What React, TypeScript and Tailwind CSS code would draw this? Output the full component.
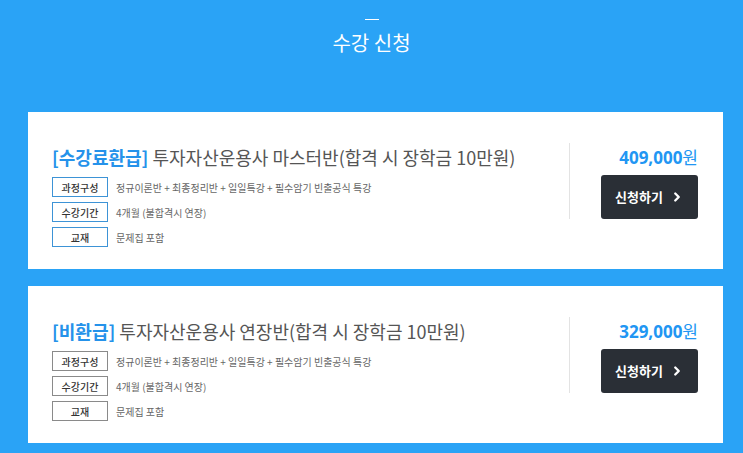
import { ChevronRight } from "lucide-react";

type Course = {
  tag: string;
  name: string;
  price: string;
  labelBorder: string;
};

const courses: Course[] = [
  {
    tag: "[수강료환급]",
    name: "투자자산운용사 마스터반(합격 시 장학금 10만원)",
    price: "409,000",
    labelBorder: "border-[#3d93d6]",
  },
  {
    tag: "[비환급]",
    name: "투자자산운용사 연장반(합격 시 장학금 10만원)",
    price: "329,000",
    labelBorder: "border-[#8a8a8a]",
  },
];

const rows = [
  { label: "과정구성", value: "정규이론반 + 최종정리반 + 일일특강 + 필수암기 빈출공식 특강" },
  { label: "수강기간", value: "4개월 (불합격시 연장)" },
  { label: "교재", value: "문제집 포함" },
];

function CourseCard({ course }: { course: Course }) {
  return (
    <div className="flex items-start bg-white pl-[24px] pr-[25px] pt-[31px] pb-[22px]">
      {/* Left: title + info rows */}
      <div className="flex-1 pt-[2px]">
        <h2 className="text-[18px] leading-[24px] text-[#555]">
          <span className="font-bold text-[#2592ea]">{course.tag}</span> {course.name}
        </h2>
        <div className="mt-[8px] flex flex-col gap-[5px]">
          {rows.map((row) => (
            <div key={row.label} className="flex items-center">
              <span
                className={`flex h-[20px] w-[56px] items-center justify-center border ${course.labelBorder} text-[10px] font-medium text-[#333]`}
              >
                {row.label}
              </span>
              <span className="ml-[8px] text-[10px] text-[#666]">{row.value}</span>
            </div>
          ))}
        </div>
      </div>

      {/* Right: price + button */}
      <div className="flex h-[76px] w-[129px] flex-col items-end border-l border-[#e3e3e3]">
        <p className="leading-[28px] text-[#2196f3]">
          <span className="font-['Open_Sans','Noto_Sans_CJK_KR',sans-serif] text-[17px] font-bold">
            {course.price}
          </span>
          <span className="text-[17px]">원</span>
        </p>
        <button className="mt-[3px] flex h-[44px] w-[97px] items-center justify-center gap-[7px] rounded-[3px] bg-[#2a2f36] text-[13px] font-bold text-white">
          신청하기
          <ChevronRight size={14} strokeWidth={4} />
        </button>
      </div>
    </div>
  );
}

export default function App() {
  return (
    <div className="min-h-[453px] bg-[#2aa3f6] font-['Noto_Sans_CJK_KR','Noto_Sans',sans-serif]">
      {/* Header */}
      <div className="flex flex-col items-center pt-[19px]">
        <div className="h-px w-[14px] bg-white" />
        <h1 className="mt-[8px] text-[20px] leading-[30px] text-white">수강 신청</h1>
      </div>

      {/* Course cards */}
      <div className="mt-[54px] flex flex-col gap-[17px] pl-[28px] pr-[20px]">
        {courses.map((c) => (
          <CourseCard key={c.tag} course={c} />
        ))}
      </div>
    </div>
  );
}
